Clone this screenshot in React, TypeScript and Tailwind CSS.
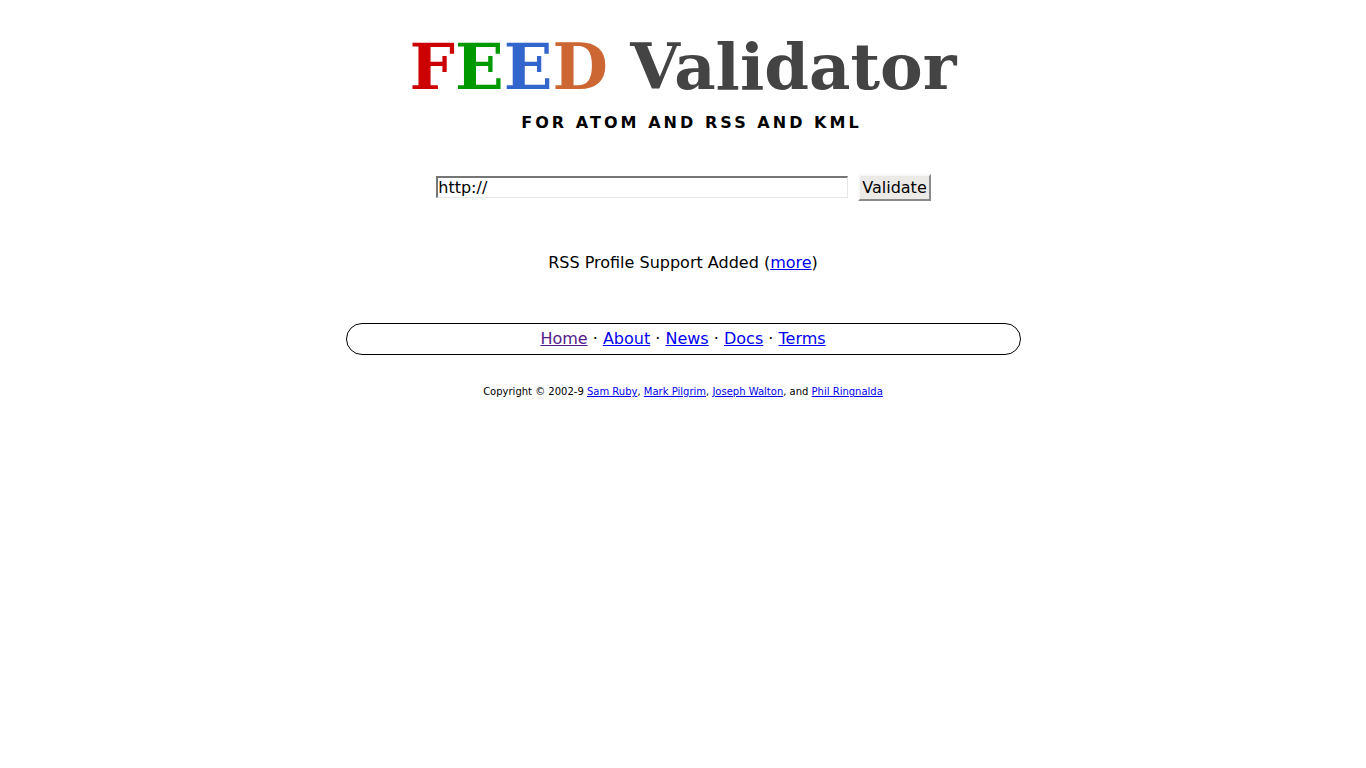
const links = ["Home", "About", "News", "Docs", "Terms"];

export default function App() {
  return (
    <div className="min-h-screen bg-white text-black font-['DejaVu_Sans',sans-serif] text-base">
      <div className="flex flex-col items-center pt-[24px]">
        <h1 className="font-['DejaVu_Serif',serif] font-bold text-[64px] leading-[86px] text-[#444444]">
          <span className="text-[#cc0000]">F</span>
          <span className="text-[#009900]">E</span>
          <span className="text-[#3366cc]">E</span>
          <span className="text-[#cc6633]">D</span> Validator
        </h1>
        <p className="mt-[3px] pl-[17px] text-base font-bold tracking-[0.19em] leading-[20px]">FOR ATOM AND RSS AND KML</p>

        <form className="mt-[40px] flex items-center gap-[10px] pl-[1px]" onSubmit={(e) => e.preventDefault()}>
          <input
            defaultValue="http://"
            className="w-[412px] h-[22px] px-0 text-base leading-none border border-t-2 border-l-2 border-t-[#767676] border-l-[#767676] border-b-[#e6e6e6] border-r-[#e6e6e6] outline-none"
          />
          <button className="mt-[1px] h-[27px] px-[2px] bg-[#eceae6] border-2 border-t-[#f8f8f8] border-l-[#f8f8f8] border-b-[#8a8a8a] border-r-[#8a8a8a] leading-none">
            Validate
          </button>
        </form>

        <p className="mt-[52px] leading-[20px]">
          RSS Profile Support Added (<a href="#" className="text-[#0000ee] underline">more</a>)
        </p>

        <div className="mt-[50px] w-[675px] h-[32px] border border-black rounded-[16px] text-center leading-[30px]">
          {links.map((l, i) => (
            <span key={l}>
              {i > 0 && " · "}
              <a href="#" className={`underline ${i === 0 ? "text-[#551a8b]" : "text-[#0000ee]"}`}>{l}</a>
            </span>
          ))}
        </div>

        <p className="mt-[30px] text-[10px] leading-[14px]">
          Copyright © 2002-9 <a href="#" className="text-[#0000ee] underline">Sam Ruby</a>,{" "}
          <a href="#" className="text-[#0000ee] underline">Mark Pilgrim</a>,{" "}
          <a href="#" className="text-[#0000ee] underline">Joseph Walton</a>, and{" "}
          <a href="#" className="text-[#0000ee] underline">Phil Ringnalda</a>
        </p>
      </div>
    </div>
  );
}
